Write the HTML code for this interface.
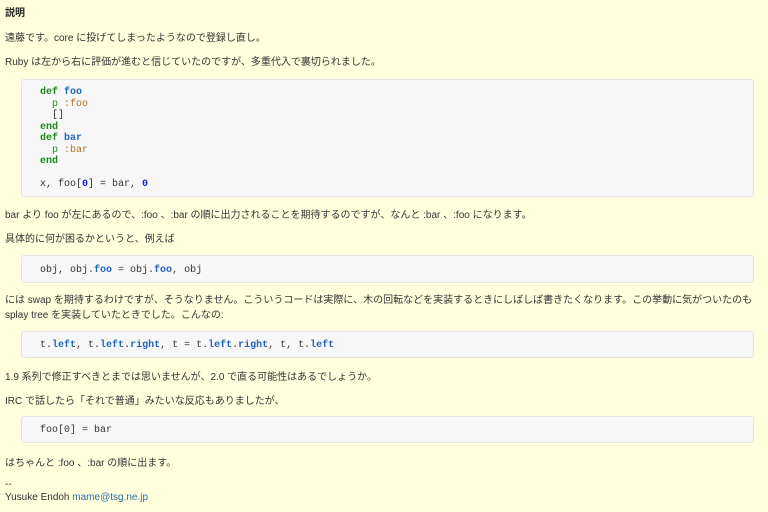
<!DOCTYPE html>
<html><head><meta charset="utf-8"><style>
html,body{margin:0;padding:0;}
body{width:768px;height:512px;background:#ffffdd;overflow:hidden;position:relative;font-family:"Liberation Sans","Noto Sans CJK JP",sans-serif;font-size:10px;color:#333;}
.t{position:absolute;left:5px;white-space:nowrap;line-height:14px;}
.b{position:absolute;left:21px;width:731px;background:#f7f7f7;border:1px solid #e3e3e3;border-radius:3px;}
pre{margin:0;position:absolute;left:18px;font-family:"Liberation Mono",monospace;font-size:10px;line-height:11.5px;color:#333;}
.k{color:#1a8a1a;font-weight:bold}.f{color:#2266bb;font-weight:bold}.s{color:#b0702a}.n{color:#1a1aff;font-weight:bold}.p{color:#2a8a2a}
a{color:#2a6fa8;text-decoration:none}
</style></head><body>
<div class="t" style="top:7px;font-weight:bold;color:#222">説明</div>
<div class="t" style="top:32px">遠藤です。core に投げてしまったようなので登録し直し。</div>
<div class="t" style="top:56px">Ruby は左から右に評価が進むと信じていたのですが、多重代入で裏切られました。</div>
<div class="b" style="top:79px;height:116px"><pre style="top:7px"><span class="k">def</span> <span class="f">foo</span>
  <span class="p">p</span> <span class="s">:foo</span>
  []
<span class="k">end</span>
<span class="k">def</span> <span class="f">bar</span>
  <span class="p">p</span> <span class="s">:bar</span>
<span class="k">end</span>

x, foo[<span class="n">0</span>] = bar, <span class="n">0</span></pre></div>
<div class="t" style="top:209px">bar より foo が左にあるので、:foo 、:bar の順に出力されることを期待するのですが、なんと :bar 、:foo になります。</div>
<div class="t" style="top:233px">具体的に何が困るかというと、例えば</div>
<div class="b" style="top:255px;height:26px"><pre style="top:9px">obj, obj.<span class="f">foo</span> = obj.<span class="f">foo</span>, obj</pre></div>
<div class="t" style="top:294px">には swap を期待するわけですが、そうなりません。こういうコードは実際に、木の回転などを実装するときにしばしば書きたくなります。この挙動に気がついたのも</div>
<div class="t" style="top:309px">splay tree を実装していたときでした。こんなの:</div>
<div class="b" style="top:331px;height:25px"><pre style="top:8px">t.<span class="f">left</span>, t.<span class="f">left</span>.<span class="f">right</span>, t = t.<span class="f">left</span>.<span class="f">right</span>, t, t.<span class="f">left</span></pre></div>
<div class="t" style="top:371px">1.9 系列で修正すべきとまでは思いませんが、2.0 で直る可能性はあるでしょうか。</div>
<div class="t" style="top:395px">IRC で話したら「それで普通」みたいな反応もありましたが、</div>
<div class="b" style="top:416px;height:25px"><pre style="top:8px">foo[0] = bar</pre></div>
<div class="t" style="top:457px">はちゃんと :foo 、:bar の順に出ます。</div>
<div class="t" style="top:478px">--</div>
<div class="t" style="top:491px">Yusuke Endoh <a>mame@tsg.ne.jp</a></div>
</body></html>
